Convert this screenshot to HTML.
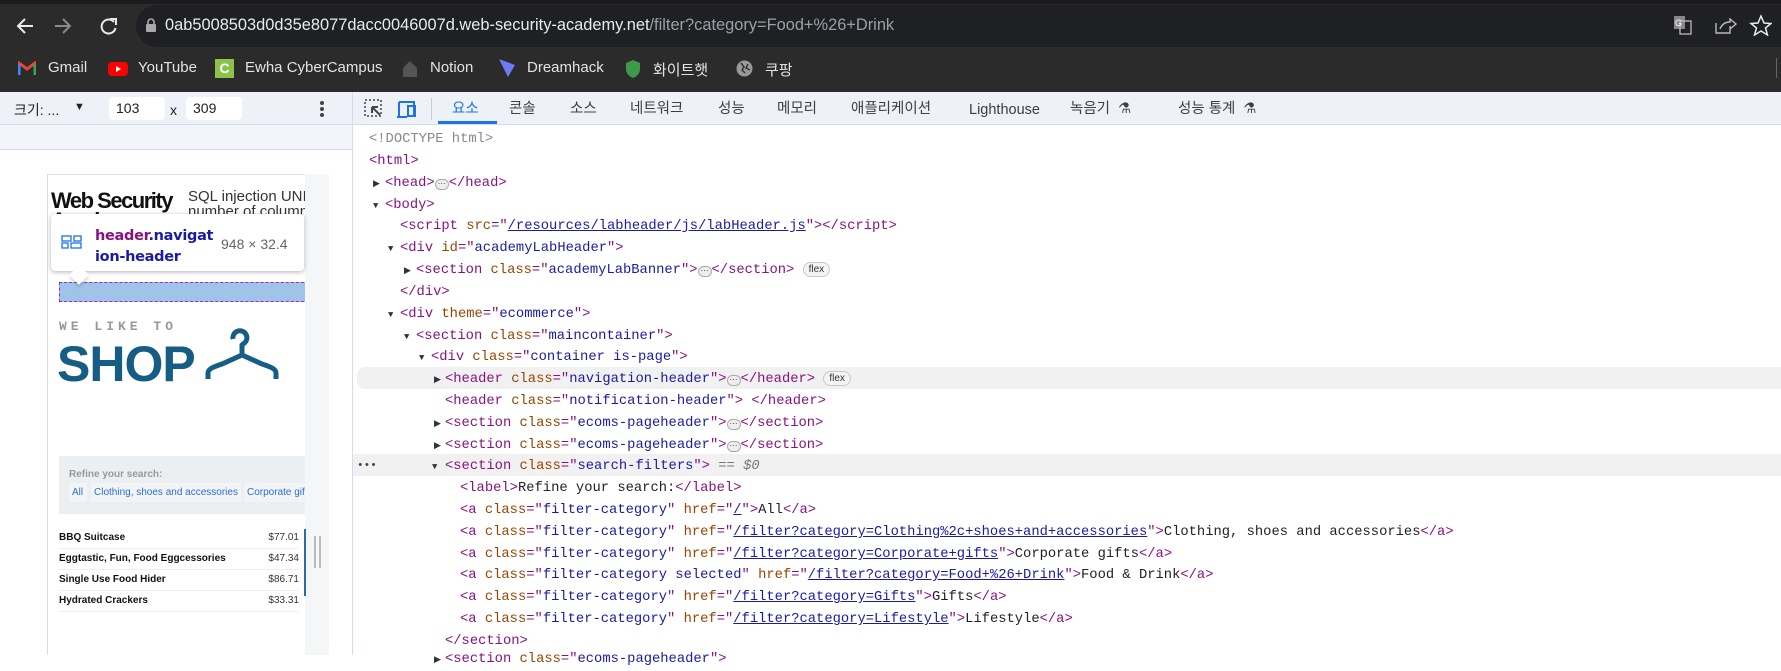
<!DOCTYPE html>
<html><head><meta charset="utf-8"><style>
*{margin:0;padding:0;box-sizing:border-box}
body{width:1781px;height:655px;overflow:hidden;position:relative;background:#fff;font-family:"Liberation Sans","Noto Sans CJK KR",sans-serif}
.a{position:absolute;white-space:nowrap}
.top{left:0;top:0;width:1781px;height:92px;background:#2b2b2b}
.pill{left:136px;top:5px;width:1645px;height:42px;background:#1f2023;border-radius:21px 0 0 21px}
.bm{color:#e3e3e3;font-size:15px;top:59px}
.tb{left:0;top:92px;width:1781px;height:33px;background:#eef1f8;border-bottom:1px solid #d3dcec}
.tab{top:99px;font-size:14.5px;color:#3c4043;line-height:20px}
.code{font-family:"Liberation Mono",monospace;font-size:13.8px;color:#222;line-height:22px}
.t{color:#881280}.n{color:#994500}.v{color:#1a1aa6}.u{color:#1a1aa6;text-decoration:underline}
.pl{display:inline-block;border:1px solid #c8c8c8;border-radius:8px;font-family:"Liberation Sans",sans-serif;font-size:10px;line-height:13px;padding:0 5px;color:#333;background:#f4f4f4;vertical-align:1px}
.dot{display:inline-block;width:14px;height:11px;border:1px solid #aaa;border-radius:6px;background:#eee;font-size:8px;line-height:8px;text-align:center;vertical-align:0px;font-family:"Liberation Sans",sans-serif}
.tri{font-size:9px;color:#333}
</style></head><body>
<div class="a top"></div>
<div class="a" style="left:0;top:0;width:1781px;height:4px;background:#1c1c1c"></div>
<div class="a pill"></div>
<svg class="a" style="left:14px;top:14px" width="110" height="24" viewBox="0 0 110 24"><path d="M19 12H5M11 5l-7 7 7 7" stroke="#e8eaed" stroke-width="2" fill="none"/><path d="M41 12h14M49 5l7 7-7 7" stroke="#8a8a8a" stroke-width="2" fill="none"/><path d="M100 8a7 7 0 1 0 1.5 6" stroke="#e8eaed" stroke-width="2" fill="none"/><path d="M96 5h6v6" stroke="#e8eaed" stroke-width="2" fill="none"/></svg>
<svg class="a" style="left:145px;top:18px" width="12" height="15"><rect x="1" y="6" width="10" height="8" rx="1" fill="#aaa"/><path d="M3 6V4a3 3 0 0 1 6 0v2" stroke="#aaa" stroke-width="1.6" fill="none"/></svg>
<div class="a" style="left:165px;top:16px;font-size:16.4px;color:#e8eaed">0ab5008503d0d35e8077dacc0046007d.web-security-academy.net<span style="color:#9aa0a6">/filter?category=Food+%26+Drink</span></div>
<svg class="a" style="left:1672px;top:14px" width="100" height="22"><rect x="2" y="2" width="11" height="13" fill="#888"/><rect x="8" y="7" width="11" height="13" fill="none" stroke="#bbb" stroke-width="1.3"/><text x="3" y="12" font-size="9" fill="#fff" font-family="Liberation Sans">G</text><path d="M44 9v10h14v-4M48 15c2-5 6-7 10-7V5l6 5-6 5v-3" stroke="#bbb" stroke-width="1.4" fill="none"/><path d="M89 2l3 7 7 .5-5.5 4.5 2 7-6.5-4-6.5 4 2-7L79 9.5l7-.5z" stroke="#e8eaed" stroke-width="1.5" fill="none"/></svg>
<svg class="a" style="left:18px;top:61px" width="18" height="14"><path d="M1 14V2l8 6 8-6v12" stroke="#ea4335" stroke-width="3" fill="none"/><path d="M1 14V3" stroke="#4285f4" stroke-width="3"/><path d="M17 14V3" stroke="#34a853" stroke-width="3"/></svg>
<div class="a bm" style="left:48px">Gmail</div>
<svg class="a" style="left:108px;top:62px" width="20" height="14"><rect width="20" height="14" rx="4" fill="#f00"/><path d="M8 4l5 3-5 3z" fill="#fff"/></svg>
<div class="a bm" style="left:138px">YouTube</div>
<div class="a" style="left:215px;top:59px;width:19px;height:19px;background:#8bc34a;color:#fff;font-weight:bold;font-size:14px;text-align:center;line-height:19px">C</div>
<div class="a bm" style="left:245px">Ewha CyberCampus</div>
<svg class="a" style="left:402px;top:60px" width="16" height="17"><path d="M1 8l7-7 7 7v9H1z" fill="#555"/></svg>
<div class="a bm" style="left:430px">Notion</div>
<svg class="a" style="left:498px;top:58px" width="18" height="20"><path d="M1 1l16 6-7 12z" fill="#6b7cf6"/></svg>
<div class="a bm" style="left:527px">Dreamhack</div>
<svg class="a" style="left:625px;top:59px" width="16" height="19"><path d="M8 1l7 3v6c0 5-4 8-7 9-3-1-7-4-7-9V4z" fill="#3c9a4a"/></svg>
<div class="a bm" style="left:653px">화이트햇</div>
<svg class="a" style="left:736px;top:60px" width="17" height="17"><circle cx="8.5" cy="8.5" r="8" fill="#999"/><path d="M5 3l3 4-2 3 3 3M12 4l-2 4 4 2" stroke="#333" stroke-width="1.5" fill="none"/></svg>
<div class="a bm" style="left:765px">쿠팡</div>
<div class="a" style="left:1776px;top:58px;width:1px;height:20px;background:#666"></div>
<div class="a tb"></div>
<div class="a" style="left:14px;top:100px;font-size:14px;color:#222">크기: ...</div>
<div class="a" style="left:74px;top:101px;font-size:11px;color:#222">▼</div>
<div class="a" style="left:109px;top:97px;width:56px;height:23px;background:#fff;border-radius:4px;font-size:14px;padding:3px 7px;color:#222">103</div>
<div class="a" style="left:170px;top:102px;font-size:14px;color:#222">x</div>
<div class="a" style="left:186px;top:97px;width:56px;height:23px;background:#fff;border-radius:4px;font-size:14px;padding:3px 7px;color:#222">309</div>
<svg class="a" style="left:319px;top:100px" width="6" height="18"><circle cx="3" cy="3" r="2" fill="#444"/><circle cx="3" cy="9" r="2" fill="#444"/><circle cx="3" cy="15" r="2" fill="#444"/></svg>
<div class="a" style="left:352px;top:92px;width:1px;height:563px;background:#d3dcec"></div>
<svg class="a" style="left:364px;top:99px" width="60" height="20"><rect x="1" y="1" width="16" height="16" fill="none" stroke="#444" stroke-dasharray="2 2" stroke-width="1.5"/><path d="M8 8l8 8M8 8h6M8 8v6" stroke="#444" stroke-width="2" fill="none"/><path d="M35 3h15v13M35 3v15h6" stroke="#1a73e8" stroke-width="2" fill="none"/><rect x="44" y="7" width="7" height="10" fill="none" stroke="#1a73e8" stroke-width="2"/><path d="M33 18h10" stroke="#1a73e8" stroke-width="2"/></svg>
<div class="a" style="left:431px;top:98px;width:1px;height:22px;background:#ccc"></div>
<div class="a tab" style="left:452px;color:#1a73e8">요소</div>
<div class="a" style="left:438px;top:121px;width:59px;height:3px;background:#1a73e8"></div>
<div class="a tab" style="left:509px">콘솔</div>
<div class="a tab" style="left:570px">소스</div>
<div class="a tab" style="left:630px">네트워크</div>
<div class="a tab" style="left:718px">성능</div>
<div class="a tab" style="left:777px">메모리</div>
<div class="a tab" style="left:851px">애플리케이션</div>
<div class="a tab" style="left:969px;top:100px">Lighthouse</div>
<div class="a tab" style="left:1070px">녹음기 <span style="margin-left:4px">⚗</span></div>
<div class="a tab" style="left:1178px">성능 통계 <span style="margin-left:4px">⚗</span></div>
<div class="a" style="left:0;top:125px;width:352px;height:25px;background:#f3f5fa;border-bottom:1px solid #d3dcec"></div>
<div class="a" style="left:305px;top:174px;width:24px;height:481px;background:#f5f6f8"></div>
<div class="a" style="left:47px;top:174px;width:258px;height:481px;background:#fff;border-left:1px solid #ddd;border-top:1px solid #ddd;overflow:hidden">
 <div class="a" style="left:3px;top:13px;font-size:22px;font-weight:bold;letter-spacing:-1.5px;color:#111">Web Security</div>
 <div class="a" style="left:3px;top:33px;font-size:22px;font-weight:bold;letter-spacing:-1.5px;color:#111">Academy</div>
 <div class="a" style="left:138px;top:14px;font-size:15px;color:#333;line-height:15px;background:#fff;padding-left:2px">SQL injection UNION<br>number of columns</div>
 <div class="a" style="left:11px;top:107px;width:260px;height:20px;background:#a0c4e8;border:1px dashed #a020f0"></div>
 <div class="a" style="left:11px;top:144px;font-family:'Liberation Mono',monospace;font-size:13px;color:#999;letter-spacing:4px;font-weight:bold">WE LIKE TO</div>
 <div class="a" style="left:9px;top:164px;font-size:50px;font-weight:bold;color:#155d85;letter-spacing:-1px;line-height:50px">SHOP</div>
 <svg class="a" style="left:156px;top:152px" width="76" height="55"><path d="M29 12a7 7 0 1 1 10 5l-1 1v10M4 52v-6c0-4 5-6 14-9l20-9 20 9c9 3 14 5 14 9v6" stroke="#155d85" stroke-width="5" fill="none"/></svg>
 <div class="a" style="left:11px;top:281px;width:250px;height:58px;background:#ebeff2"></div>
 <div class="a" style="left:21px;top:294px;font-size:10px;font-weight:bold;color:#999">Refine your search:</div>
 <div class="a" style="left:21px;top:308px;height:19px;width:18px;background:#f2f4f6;font-size:10px;color:#2a6fd6;padding:4px 3px">All</div>
 <div class="a" style="left:43px;top:308px;height:19px;width:150px;background:#f2f4f6;font-size:10px;color:#2a6fd6;padding:4px 3px">Clothing, shoes and accessories</div>
 <div class="a" style="left:196px;top:308px;height:19px;width:70px;background:#f2f4f6;font-size:10px;color:#2a6fd6;padding:4px 3px">Corporate gifts</div>
 <div class="a" style="left:11px;top:353px;width:240px;font-size:10px;font-weight:bold;color:#111;line-height:20px">
  <div style="border-bottom:1px solid #eee">BBQ Suitcase<span style="float:right;font-weight:normal;color:#333">$77.01</span></div>
  <div style="border-bottom:1px solid #eee">Eggtastic, Fun, Food Eggcessories<span style="float:right;font-weight:normal;color:#333">$47.34</span></div>
  <div style="border-bottom:1px solid #eee">Single Use Food Hider<span style="float:right;font-weight:normal;color:#333">$86.71</span></div>
  <div style="border-bottom:1px solid #eee">Hydrated Crackers<span style="float:right;font-weight:normal;color:#333">$33.31</span></div>
 </div>
</div>
<div class="a" style="left:304px;top:529px;width:2px;height:67px;background:#2e6ca4"></div>
<div class="a" style="left:314px;top:536px;width:2px;height:32px;background:#bbb"></div>
<div class="a" style="left:319px;top:536px;width:2px;height:32px;background:#bbb"></div>
<div class="a" style="left:51px;top:214px;width:253px;height:57px;background:#fff;border-radius:4px;box-shadow:0 1px 5px rgba(0,0,0,.3)"></div>
<div class="a" style="left:72px;top:268px;width:14px;height:14px;background:#fff;transform:rotate(45deg);box-shadow:2px 2px 3px rgba(0,0,0,.15)"></div>
<svg class="a" style="left:61px;top:235px" width="22" height="14"><rect x="1" y="1" width="9" height="5" fill="none" stroke="#1a73e8" stroke-width="1.3"/><rect x="13" y="1" width="7" height="5" fill="none" stroke="#1a73e8" stroke-width="1.3"/><rect x="1" y="8" width="6" height="5" fill="none" stroke="#1a73e8" stroke-width="1.3"/><rect x="10" y="8" width="10" height="5" fill="none" stroke="#1a73e8" stroke-width="1.3"/></svg>
<div class="a" style="left:95px;top:226px;font-size:14.5px;font-weight:bold;line-height:21px;font-family:'DejaVu Sans',sans-serif;letter-spacing:-.3px"><span style="color:#881280">header</span><span style="color:#1a1aa6">.navigat</span><br><span style="color:#1a1aa6">ion-header</span></div>
<div class="a" style="left:221px;top:236px;font-size:14px;color:#666">948 × 32.4</div>
<div class="a" style="left:357px;top:367px;width:1424px;height:22px;background:#f1f1f1;border-radius:8px 0 0 8px"></div>
<div class="a" style="left:353px;top:454px;width:1428px;height:22px;background:#f1f1f1"></div>
<div class="a code" style="left:357px;top:455px;color:#444;font-size:11px">•••</div>
<div class="a code" style="left:0;top:129px;width:1781px">
<div style="position:absolute;left:369px;top:0"><span style="color:#888">&lt;!DOCTYPE html&gt;</span></div>
<div style="position:absolute;left:369px;top:22px"><span class="t">&lt;html&gt;</span></div>
<div style="position:absolute;left:373px;top:44px"><span class="tri">▶</span></div><div style="position:absolute;left:385px;top:44px"><span class="t">&lt;head&gt;</span><span class="dot">···</span><span class="t">&lt;/head&gt;</span></div>
<div style="position:absolute;left:373px;top:66px"><span class="tri">▼</span></div><div style="position:absolute;left:385px;top:66px"><span class="t">&lt;body&gt;</span></div>
<div style="position:absolute;left:400px;top:87px"><span class="t">&lt;script </span><span class="n">src</span><span class="t">="</span><span class="u">/resources/labheader/js/labHeader.js</span><span class="t">"&gt;&lt;/script&gt;</span></div>
<div style="position:absolute;left:388px;top:109px"><span class="tri">▼</span></div><div style="position:absolute;left:400px;top:109px"><span class="t">&lt;div </span><span class="n">id</span><span class="t">="</span><span class="v">academyLabHeader</span><span class="t">"&gt;</span></div>
<div style="position:absolute;left:404px;top:131px"><span class="tri">▶</span></div><div style="position:absolute;left:416px;top:131px"><span class="t">&lt;section </span><span class="n">class</span><span class="t">="</span><span class="v">academyLabBanner</span><span class="t">"&gt;</span><span class="dot">···</span><span class="t">&lt;/section&gt;</span> <span class="pl">flex</span></div>
<div style="position:absolute;left:400px;top:153px"><span class="t">&lt;/div&gt;</span></div>
<div style="position:absolute;left:388px;top:175px"><span class="tri">▼</span></div><div style="position:absolute;left:400px;top:175px"><span class="t">&lt;div </span><span class="n">theme</span><span class="t">="</span><span class="v">ecommerce</span><span class="t">"&gt;</span></div>
<div style="position:absolute;left:404px;top:197px"><span class="tri">▼</span></div><div style="position:absolute;left:416px;top:197px"><span class="t">&lt;section </span><span class="n">class</span><span class="t">="</span><span class="v">maincontainer</span><span class="t">"&gt;</span></div>
<div style="position:absolute;left:419px;top:218px"><span class="tri">▼</span></div><div style="position:absolute;left:431px;top:218px"><span class="t">&lt;div </span><span class="n">class</span><span class="t">="</span><span class="v">container is-page</span><span class="t">"&gt;</span></div>
<div style="position:absolute;left:434px;top:240px"><span class="tri">▶</span></div><div style="position:absolute;left:445px;top:240px"><span class="t">&lt;header </span><span class="n">class</span><span class="t">="</span><span class="v">navigation-header</span><span class="t">"&gt;</span><span class="dot">···</span><span class="t">&lt;/header&gt;</span> <span class="pl">flex</span></div>
<div style="position:absolute;left:445px;top:262px"><span class="t">&lt;header </span><span class="n">class</span><span class="t">="</span><span class="v">notification-header</span><span class="t">"&gt; &lt;/header&gt;</span></div>
<div style="position:absolute;left:434px;top:284px"><span class="tri">▶</span></div><div style="position:absolute;left:445px;top:284px"><span class="t">&lt;section </span><span class="n">class</span><span class="t">="</span><span class="v">ecoms-pageheader</span><span class="t">"&gt;</span><span class="dot">···</span><span class="t">&lt;/section&gt;</span></div>
<div style="position:absolute;left:434px;top:306px"><span class="tri">▶</span></div><div style="position:absolute;left:445px;top:306px"><span class="t">&lt;section </span><span class="n">class</span><span class="t">="</span><span class="v">ecoms-pageheader</span><span class="t">"&gt;</span><span class="dot">···</span><span class="t">&lt;/section&gt;</span></div>
<div style="position:absolute;left:432px;top:327px"><span class="tri">▼</span></div><div style="position:absolute;left:445px;top:327px"><span class="t">&lt;section </span><span class="n">class</span><span class="t">="</span><span class="v">search-filters</span><span class="t">"&gt;</span> <span style="color:#777">== <i>$0</i></span></div>
<div style="position:absolute;left:460px;top:349px"><span class="t">&lt;label&gt;</span>Refine your search:<span class="t">&lt;/label&gt;</span></div>
<div style="position:absolute;left:460px;top:371px"><span class="t">&lt;a </span><span class="n">class</span><span class="t">="</span><span class="v">filter-category</span><span class="t">" </span><span class="n">href</span><span class="t">="</span><span class="u">/</span><span class="t">"&gt;</span>All<span class="t">&lt;/a&gt;</span></div>
<div style="position:absolute;left:460px;top:393px"><span class="t">&lt;a </span><span class="n">class</span><span class="t">="</span><span class="v">filter-category</span><span class="t">" </span><span class="n">href</span><span class="t">="</span><span class="u">/filter?category=Clothing%2c+shoes+and+accessories</span><span class="t">"&gt;</span>Clothing, shoes and accessories<span class="t">&lt;/a&gt;</span></div>
<div style="position:absolute;left:460px;top:415px"><span class="t">&lt;a </span><span class="n">class</span><span class="t">="</span><span class="v">filter-category</span><span class="t">" </span><span class="n">href</span><span class="t">="</span><span class="u">/filter?category=Corporate+gifts</span><span class="t">"&gt;</span>Corporate gifts<span class="t">&lt;/a&gt;</span></div>
<div style="position:absolute;left:460px;top:436px"><span class="t">&lt;a </span><span class="n">class</span><span class="t">="</span><span class="v">filter-category selected</span><span class="t">" </span><span class="n">href</span><span class="t">="</span><span class="u">/filter?category=Food+%26+Drink</span><span class="t">"&gt;</span>Food &amp; Drink<span class="t">&lt;/a&gt;</span></div>
<div style="position:absolute;left:460px;top:458px"><span class="t">&lt;a </span><span class="n">class</span><span class="t">="</span><span class="v">filter-category</span><span class="t">" </span><span class="n">href</span><span class="t">="</span><span class="u">/filter?category=Gifts</span><span class="t">"&gt;</span>Gifts<span class="t">&lt;/a&gt;</span></div>
<div style="position:absolute;left:460px;top:480px"><span class="t">&lt;a </span><span class="n">class</span><span class="t">="</span><span class="v">filter-category</span><span class="t">" </span><span class="n">href</span><span class="t">="</span><span class="u">/filter?category=Lifestyle</span><span class="t">"&gt;</span>Lifestyle<span class="t">&lt;/a&gt;</span></div>
<div style="position:absolute;left:445px;top:502px"><span class="t">&lt;/section&gt;</span></div>
<div style="position:absolute;left:434px;top:520px"><span class="tri">▶</span></div><div style="position:absolute;left:445px;top:520px"><span class="t">&lt;section </span><span class="n">class</span><span class="t">="</span><span class="v">ecoms-pageheader</span><span class="t">"&gt;</span></div>
</div>
</body></html>
